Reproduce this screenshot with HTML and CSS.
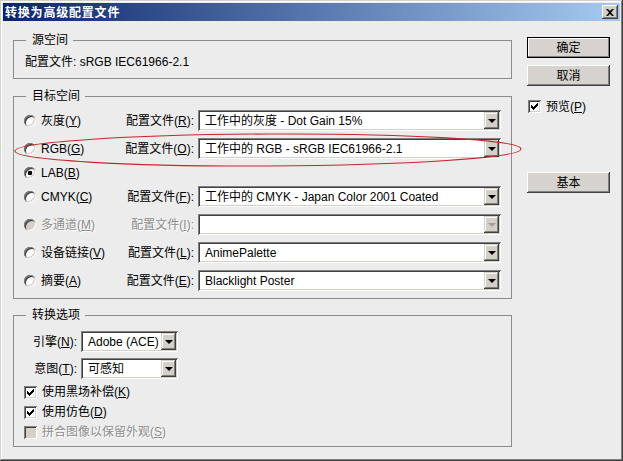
FILE: index.html
```html
<!DOCTYPE html>
<html lang="zh-CN">
<head>
<meta charset="utf-8">
<title>转换为高级配置文件</title>
<link rel="stylesheet" href="styles.css">
</head>
<body>
<div class="window">
  <div class="titlebar">
    <span class="title">转换为高级配置文件</span>
    <span class="close" aria-label="关闭">
      <svg width="8" height="7" viewBox="0 0 8 7"><path d="M0 0h2l2 2 2-2h2L5 3.5 8 7H6L4 5 2 7H0l3-3.5z" fill="#000"/></svg>
    </span>
  </div>

  <div class="client">
    <div class="main">
      <fieldset class="group g-source">
        <legend>源空间</legend>
        <div class="source-line">配置文件: sRGB IEC61966-2.1</div>
      </fieldset>

      <fieldset class="group g-dest">
        <legend>目标空间</legend>
        <div class="dest-grid">
          <label class="opt"><span class="radio"></span><span>灰度(<u>Y</u>)</span></label>
          <span class="plabel">配置文件(<u>R</u>):</span>
          <div class="combo"><span class="val">工作中的灰度 - Dot Gain 15%</span><span class="arrow"></span></div>

          <label class="opt"><span class="radio"></span><span>RGB(<u>G</u>)</span></label>
          <span class="plabel">配置文件(<u>O</u>):</span>
          <div class="combo"><span class="val">工作中的 RGB - sRGB IEC61966-2.1</span><span class="arrow"></span></div>

          <label class="opt"><span class="radio checked"></span><span>LAB(<u>B</u>)</span></label>
          <span></span>
          <span></span>

          <label class="opt"><span class="radio"></span><span>CMYK(<u>C</u>)</span></label>
          <span class="plabel">配置文件(<u>F</u>):</span>
          <div class="combo"><span class="val">工作中的 CMYK - Japan Color 2001 Coated</span><span class="arrow"></span></div>

          <label class="opt disabled"><span class="radio"></span><span>多通道(<u>M</u>)</span></label>
          <span class="plabel disabled">配置文件(<u>I</u>):</span>
          <div class="combo disabled"><span class="val"></span><span class="arrow"></span></div>

          <label class="opt"><span class="radio"></span><span>设备链接(<u>V</u>)</span></label>
          <span class="plabel">配置文件(<u>L</u>):</span>
          <div class="combo"><span class="val">AnimePalette</span><span class="arrow"></span></div>

          <label class="opt"><span class="radio"></span><span>摘要(<u>A</u>)</span></label>
          <span class="plabel">配置文件(<u>E</u>):</span>
          <div class="combo"><span class="val">Blacklight Poster</span><span class="arrow"></span></div>
        </div>
      </fieldset>

      <fieldset class="group g-conv">
        <legend>转换选项</legend>
        <div class="field-row">
          <span class="flabel">引擎(<u>N</u>):</span>
          <div class="combo small"><span class="val">Adobe (ACE)</span><span class="arrow"></span></div>
        </div>
        <div class="field-row">
          <span class="flabel">意图(<u>T</u>):</span>
          <div class="combo small"><span class="val">可感知</span><span class="arrow"></span></div>
        </div>
        <label class="check-row first"><span class="check on"><svg width="13" height="13" viewBox="0 0 13 13"><path d="M9 3h1v1H9zM8 4h2v1H8zM3 5h1v1H3zM7 5h3v1H7zM3 6h2v1H3zM6 6h3v1H6zM3 7h5v1H3zM4 8h3v1H4zM5 9h1v1H5z" fill="#000"/></svg></span><span>使用黑场补偿(<u>K</u>)</span></label>
        <label class="check-row"><span class="check on"><svg width="13" height="13" viewBox="0 0 13 13"><path d="M9 3h1v1H9zM8 4h2v1H8zM3 5h1v1H3zM7 5h3v1H7zM3 6h2v1H3zM6 6h3v1H6zM3 7h5v1H3zM4 8h3v1H4zM5 9h1v1H5z" fill="#000"/></svg></span><span>使用仿色(<u>D</u>)</span></label>
        <label class="check-row disabled"><span class="check"></span><span>拼合图像以保留外观(<u>S</u>)</span></label>
      </fieldset>
    </div>

    <div class="side">
      <button class="btn default">确定</button>
      <button class="btn">取消</button>
      <label class="preview"><span class="check on"><svg width="13" height="13" viewBox="0 0 13 13"><path d="M9 3h1v1H9zM8 4h2v1H8zM3 5h1v1H3zM7 5h3v1H7zM3 6h2v1H3zM6 6h3v1H6zM3 7h5v1H3zM4 8h3v1H4zM5 9h1v1H5z" fill="#000"/></svg></span><span>预览(<u>P</u>)</span></label>
      <button class="btn basic">基本</button>
    </div>
  </div>

  <!-- hand-drawn highlight around the RGB row -->
  <svg class="mark" width="623" height="461" viewBox="0 0 623 461">
    <ellipse cx="268" cy="150" rx="253" ry="16" fill="none" stroke="#c8262c" stroke-width="1.1" transform="rotate(-0.25 268 150)"/>
  </svg>
</div>
</body>
</html>
```

FILE: styles.css
```css
* { box-sizing: border-box; }

html, body {
  margin: 0;
  padding: 0;
}

body {
  width: 623px;
  height: 461px;
  overflow: hidden;
  background: #ececec;
  color: #000;
  font: 12px/14px "Liberation Sans", "Noto Sans CJK SC", sans-serif;
}

u { text-decoration: underline; text-underline-offset: 1px; }

/* window frame */
.window {
  position: relative;
  width: 623px;
  height: 461px;
  padding: 3px;
  display: flex;
  flex-direction: column;
  background: #ececec;
  box-shadow:
    inset -1px -1px #404040,
    inset 1px 1px #d4d0c8,
    inset -2px -2px #808080,
    inset 2px 2px #ffffff;
}

.titlebar {
  height: 18px;
  flex: none;
  display: flex;
  align-items: center;
  padding-left: 2px;
  background: linear-gradient(to right, #0a246a, #a6caf0);
}

.title {
  color: #fff;
  font-weight: bold;
  font-size: 12px;
  letter-spacing: 0.8px;
  font-family: "Noto Sans CJK SC", sans-serif;
}

.close {
  margin-left: auto;
  margin-right: 2px;
  width: 16px;
  height: 14px;
  display: flex;
  align-items: center;
  justify-content: center;
  background: #d4d0c8;
  box-shadow:
    inset -1px -1px #404040,
    inset 1px 1px #ffffff,
    inset -2px -2px #808080;
}

/* client area */
.client {
  flex: 1;
  display: flex;
  padding: 12px 0 0 10px;
}

.main {
  width: 499px;
  display: flex;
  flex-direction: column;
}

.group {
  margin: 0;
  min-width: 0;
  border: 1px solid #8c8c8c;
  padding: 0 10px;
}

.group legend {
  margin-left: 2px;
  padding: 0 5px 0 6px;
  height: 14px;
  line-height: 14px;
}

.g-source { padding-top: 8px; padding-bottom: 9px; margin-bottom: 10px; }
.g-dest { padding-top: 7px; padding-bottom: 7px; margin-bottom: 9px; }
.g-conv { padding-top: 9px; padding-bottom: 4px; }

.source-line { padding-left: 1px; }

/* destination rows */
.dest-grid {
  display: grid;
  grid-template-columns: 96px 78px 303px;
  grid-template-rows: 21px 21px 13px 21px 21px 21px 21px;
  row-gap: 7px;
  align-items: center;
}

.opt {
  display: flex;
  align-items: center;
  gap: 5px;
}

.plabel {
  text-align: right;
  padding-right: 4px;
}

.disabled {
  color: #8d8d8d;
  text-shadow: 1px 1px #ffffff;
}

.radio {
  width: 12px;
  height: 12px;
  flex: none;
  border-radius: 50%;
  background: #fff;
  box-shadow:
    inset 1px 1px #808080,
    inset -1px -1px #ffffff,
    inset 2px 2px #404040,
    inset -2px -2px #d4d0c8;
}

.radio.checked {
  background: radial-gradient(circle at 50% 50%, #000 0 2px, #fff 2.6px);
}

.opt.disabled .radio { background: #d4d0c8; }

/* combo boxes */
.combo {
  height: 21px;
  display: flex;
  align-items: center;
  padding: 2px;
  background: #fff;
  box-shadow:
    inset 1px 1px #808080,
    inset -1px -1px #ffffff,
    inset 2px 2px #404040,
    inset -2px -2px #d4d0c8;
}

.combo .val {
  flex: 1;
  padding-left: 5px;
  white-space: nowrap;
  overflow: hidden;
}

.combo .arrow {
  width: 15px;
  height: 17px;
  flex: none;
  display: flex;
  align-items: center;
  justify-content: center;
  background: #d4d0c8;
  box-shadow:
    inset -1px -1px #404040,
    inset 1px 1px #d4d0c8,
    inset -2px -2px #808080,
    inset 2px 2px #ffffff;
}

.combo .arrow::before {
  content: "";
  width: 0;
  height: 0;
  margin-top: 1px;
  border-left: 4px solid transparent;
  border-right: 4px solid transparent;
  border-top: 4px solid #000;
}

.combo.disabled { text-shadow: none; }
.combo.disabled .arrow::before { border-top-color: #a0a0a0; }

.combo.small { width: 97px; }
.combo.small .val { padding-left: 5px; }

/* conversion options */
.field-row {
  display: flex;
  align-items: center;
  gap: 4px;
  height: 21px;
}

.field-row + .field-row { margin-top: 6px; }

.flabel {
  width: 53px;
  text-align: right;
}

.check-row {
  display: flex;
  align-items: center;
  gap: 5px;
  height: 20px;
}

.check-row.first { margin-top: 3px; }

.check {
  width: 13px;
  height: 13px;
  flex: none;
  display: block;
  background: #fff;
  box-shadow:
    inset 1px 1px #808080,
    inset -1px -1px #ffffff,
    inset 2px 2px #404040,
    inset -2px -2px #d4d0c8;
}

.check svg { display: block; }

.check-row.disabled .check { background: #d4d0c8; }

/* side buttons */
.side {
  width: 83px;
  margin-left: 15px;
  margin-top: 4px;
  display: flex;
  flex-direction: column;
}

.btn {
  width: 83px;
  height: 21px;
  padding: 0;
  border: 0;
  font: inherit;
  color: #000;
  background: #d6d3ce;
  box-shadow:
    inset -1px -1px #404040,
    inset 1px 1px #ffffff,
    inset -2px -2px #808080;
}

.btn.default {
  box-shadow:
    inset 0 0 0 1px #000,
    inset -2px -2px #808080,
    inset 2px 2px #ffffff;
}

.btn + .btn { margin-top: 7px; }

.preview {
  display: flex;
  align-items: center;
  gap: 5px;
  height: 13px;
  margin: 14px 0 0 1px;
}

.btn.basic { margin-top: 59px; }

.mark {
  position: absolute;
  left: 0;
  top: 0;
  pointer-events: none;
}
```
